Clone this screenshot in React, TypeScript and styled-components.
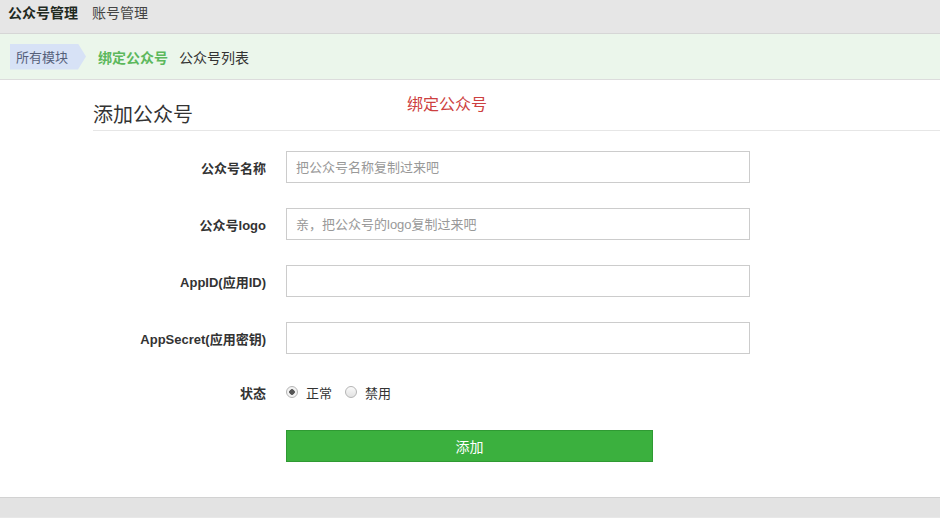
import React from "react";
import styled, { createGlobalStyle } from "styled-components";

const Global = createGlobalStyle`
  html, body { margin: 0; padding: 0; background: #fff; }
  body { font-family: "Liberation Sans", "Noto Sans CJK SC", sans-serif; color: #333; }
  * { box-sizing: border-box; }
`;

const TopBar = styled.div`
  height: 34px;
  background: #e6e6e6;
  border-bottom: 1px solid #d6d6d6;
  display: flex;
  align-items: flex-start;
  padding: 4px 0 0 8px;
  gap: 14px;
`;

const TopTab = styled.span<{ $active?: boolean }>`
  font-size: 14px;
  line-height: 18px;
  font-weight: ${(p) => (p.$active ? 700 : 400)};
  color: ${(p) => (p.$active ? "#1f2a1f" : "#444")};
`;

const Crumbs = styled.div`
  height: 46px;
  background: #ebf6eb;
  border-bottom: 1px solid #dcdcdc;
  display: flex;
  align-items: center;
  padding-left: 10px;
`;

const ModuleTag = styled.span`
  display: inline-flex;
  align-items: center;
  height: 26px;
  width: 76px;
  padding-left: 6px;
  background: #d7e2f6;
  color: #55607a;
  font-size: 13px;
  clip-path: polygon(0 0, 68px 0, 76px 50%, 68px 100%, 0 100%);
  margin-right: 12px;
`;

const Crumb = styled.span<{ $active?: boolean }>`
  font-size: 14px;
  margin-right: 11px;
  font-weight: ${(p) => (p.$active ? 700 : 400)};
  color: ${(p) => (p.$active ? "#5cb85c" : "#333")};
`;

const Main = styled.div`
  height: 417px;
  padding-left: 93px;
`;

const Header = styled.div`
  display: flex;
  align-items: flex-start;
  padding-top: 14px;
  height: 51px;
  border-bottom: 1px solid #e6e6e6;
`;

const Title = styled.h2`
  margin: 7px 0 0 0;
  font-size: 20px;
  line-height: 28px;
  font-weight: 400;
  color: #333;
`;

const Notice = styled.span`
  margin-left: 214px;
  font-size: 16px;
  line-height: 22px;
  color: #cd4040;
`;

const Form = styled.form`
  display: grid;
  grid-template-columns: 173px 464px;
  column-gap: 20px;
  row-gap: 25px;
  padding-top: 20px;
  margin-left: -93px;
  padding-left: 93px;
`;

const Label = styled.label<{ $h?: number }>`
  height: ${(p) => p.$h ?? 32}px;
  display: flex;
  align-items: center;
  justify-content: flex-end;
  font-size: 13px;
  font-weight: 700;
  color: #333;
  white-space: nowrap;
`;

const Input = styled.input`
  height: 32px;
  width: 464px;
  border: 1px solid #cccccc;
  padding: 0 9px;
  font-size: 13px;
  font-family: inherit;
  color: #333;
  outline: none;
  &::placeholder { color: #999; }
`;

const Radios = styled.div`
  height: 26px;
  display: flex;
  align-items: center;
  font-size: 13px;
  color: #333;
`;

const RadioLabel = styled.label`
  display: inline-flex;
  align-items: center;
  gap: 8px;
  margin-right: 13px;
`;

const Dot = styled.span<{ $checked?: boolean }>`
  width: 12px;
  height: 12px;
  border-radius: 50%;
  border: 1px solid #b5b5b5;
  background: ${(p) => (p.$checked ? "radial-gradient(circle, #555 0 2.5px, #f2f2f2 3px)" : "linear-gradient(#fafafa, #e2e2e2)")};
  display: inline-block;
`;

const Submit = styled.button`
  grid-column: 2;
  width: 367px;
  height: 32px;
  background: #3bb03e;
  border: 1px solid #2f9a33;
  color: #fff;
  font-size: 14px;
  font-family: inherit;
  cursor: pointer;
`;

const Footer = styled.div`
  height: 21px;
  background: #e3e3e3;
  border-top: 1px solid #d2d2d2;
  border-bottom: 1px solid #e8e8e8;
`;

export default function App() {
  return (
    <>
      <Global />
      <TopBar>
        <TopTab $active>公众号管理</TopTab>
        <TopTab>账号管理</TopTab>
      </TopBar>
      <Crumbs>
        <ModuleTag>所有模块</ModuleTag>
        <Crumb $active>绑定公众号</Crumb>
        <Crumb>公众号列表</Crumb>
      </Crumbs>
      <Main>
        <Header>
          <Title>添加公众号</Title>
          <Notice>绑定公众号</Notice>
        </Header>
        <Form onSubmit={(e) => e.preventDefault()}>
          <Label>公众号名称</Label>
          <Input placeholder="把公众号名称复制过来吧" />
          <Label>公众号logo</Label>
          <Input placeholder="亲，把公众号的logo复制过来吧" />
          <Label>AppID(应用ID)</Label>
          <Input />
          <Label>AppSecret(应用密钥)</Label>
          <Input />
          <Label $h={26}>状态</Label>
          <Radios>
            <RadioLabel>
              <Dot $checked />
              正常
            </RadioLabel>
            <RadioLabel>
              <Dot />
              禁用
            </RadioLabel>
          </Radios>
          <Submit type="submit">添加</Submit>
        </Form>
      </Main>
      <Footer />
    </>
  );
}
